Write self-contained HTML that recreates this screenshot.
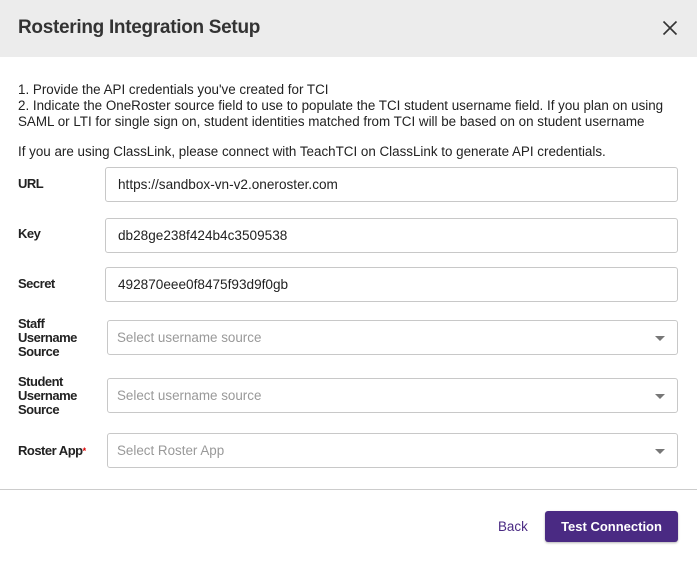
<!DOCTYPE html>
<html><head><style>
body{margin:0;width:697px;height:561px;background:#fff;font-family:"Liberation Sans",sans-serif;color:#222;position:relative;overflow:hidden}
.a{position:absolute}
.hdr{left:0;top:0;width:697px;height:57px;background:#ececec}
.t{left:18px;top:17px;font-size:19px;font-weight:bold;color:#333;letter-spacing:-0.3px}
.p{left:18px;font-size:13.4px;letter-spacing:0;line-height:16px;color:#222;white-space:nowrap}
.lb{left:18px;font-size:13px;font-weight:bold;color:#222;line-height:14px;letter-spacing:-0.5px}
.in{left:105px;border:1px solid #c8c8c8;border-radius:3px;font-size:13.6px;line-height:33px;padding-left:12px;box-sizing:border-box;width:573px;height:35px}
.sel{left:107px;width:571px;height:35px;border:1px solid #c8c8c8;border-radius:3px;box-sizing:border-box;font-size:13.4px;color:#999;line-height:33px;padding-left:9px}
.sel:after{content:"";position:absolute;right:12px;top:15px;border-left:5px solid transparent;border-right:5px solid transparent;border-top:5px solid #777}
</style></head><body>
<div class="a hdr"></div>
<div class="a t">Rostering Integration Setup</div>
<svg class="a" style="left:662px;top:20px" width="16" height="16" viewBox="0 0 16 16"><path d="M1.5 1.5L14.5 14.5M14.5 1.5L1.5 14.5" stroke="#333" stroke-width="1.6"/></svg>
<div class="a p" style="top:82px">1. Provide the API credentials you've created for TCI<br>2. Indicate the OneRoster source field to use to populate the TCI student username field. If you plan on using<br>SAML or LTI for single sign on, student identities matched from TCI will be based on on student username</div>
<div class="a p" style="top:144px">If you are using ClassLink, please connect with TeachTCI on ClassLink to generate API credentials.</div>
<div class="a lb" style="top:177px">URL</div>
<div class="a in" style="top:167px">https://sandbox-vn-v2.oneroster.com</div>
<div class="a lb" style="top:227px">Key</div>
<div class="a in" style="top:218px">db28ge238f424b4c3509538</div>
<div class="a lb" style="top:277px">Secret</div>
<div class="a in" style="top:267px">492870eee0f8475f93d9f0gb</div>
<div class="a lb" style="top:317px">Staff<br>Username<br>Source</div>
<div class="a sel" style="top:320px">Select username source</div>
<div class="a lb" style="top:375px">Student<br>Username<br>Source</div>
<div class="a sel" style="top:378px">Select username source</div>
<div class="a lb" style="top:444px">Roster App<span style="color:#d00;font-size:9px;vertical-align:top">*</span></div>
<div class="a sel" style="top:433px">Select Roster App</div>
<div class="a" style="left:0;top:489px;width:697px;height:1px;background:#ccc"></div>
<div class="a" style="left:498px;top:519px;font-size:13.4px;color:#4a2a83">Back</div>
<div class="a" style="left:545px;top:511px;width:133px;height:31px;background:#4a2a83;border-radius:3px;color:#fff;font-size:13px;font-weight:bold;line-height:31px;text-align:center;box-shadow:0 1px 2px rgba(0,0,0,.3)">Test Connection</div>
</body></html>
